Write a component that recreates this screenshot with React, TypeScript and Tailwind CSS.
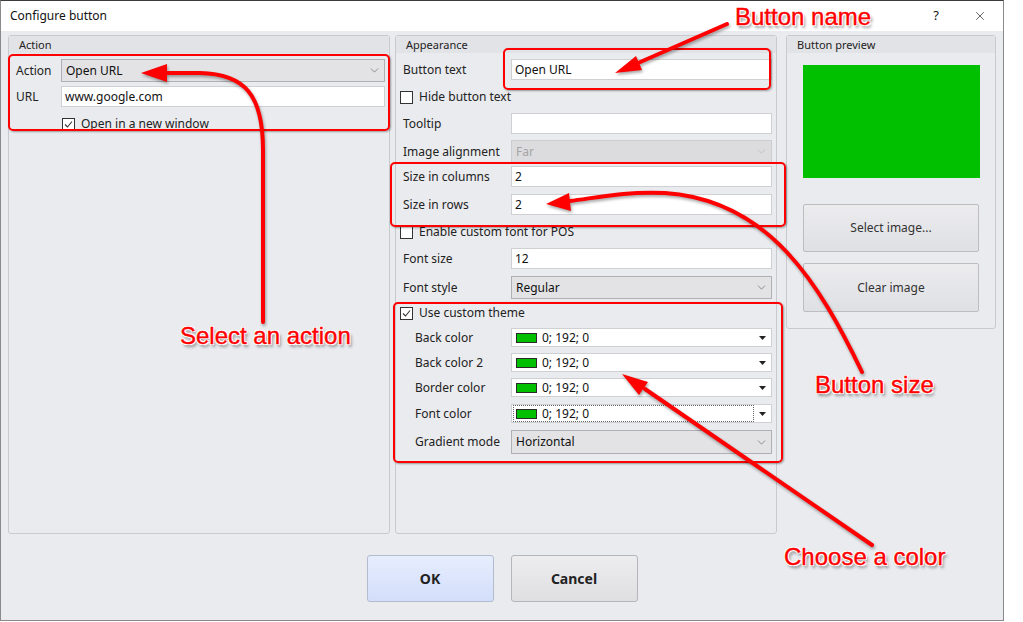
import { ChevronDown, X } from 'lucide-react';
import type { ReactNode } from 'react';

// Small building blocks for the WinForms-like dialog
const GroupBox = ({ title, className, children }: { title: string; className: string; children?: ReactNode }) => (
  <div className={`flex shrink-0 flex-col rounded-[3px] border border-[#c9cacd] ${className}`}>
    <div className="h-[17px] shrink-0 bg-[#e2e3e7] pl-[10px] text-[11px] leading-[17px] text-[#222]">{title}</div>
    {children}
  </div>
);

const TextBox = ({ value = '', className = '' }: { value?: string; className?: string }) => (
  <div className={`flex items-center border border-[#cfd0d4] bg-white px-[3px] text-[12px] text-[#111] ${className}`}>
    {value}
  </div>
);

const ComboBox = ({ value, disabled, className = '' }: { value: string; disabled?: boolean; className?: string }) => (
  <div
    className={`flex items-center justify-between border pl-[4px] pr-[3px] text-[12px] ${
      disabled ? 'border-[#cdcdcf] bg-[#dcdcde] text-[#a5a5a5]' : 'border-[#b0b0b4] bg-[#e3e3e5] text-[#111]'
    } ${className}`}
  >
    <span>{value}</span>
    <ChevronDown size={13} strokeWidth={1.3} className={disabled ? 'text-[#b8b8b8]' : 'text-[#6b6b6b]'} />
  </div>
);

const ColorBox = ({ focused }: { focused?: boolean }) => (
  <div className="flex h-full w-[261px] items-center border border-[#cfd0d4] bg-white">
    <div
      className={`ml-[1px] flex h-[17px] flex-1 items-center border pl-[2px] ${
        focused ? 'border-dotted border-[#666]' : 'border-transparent'
      }`}
    >
      <span className="h-[10px] w-[21px] border border-[#2a2a2a] bg-[#00c000]" />
      <span className="ml-[5px] text-[12px] text-[#111]">0; 192; 0</span>
    </div>
    <div className="flex w-[17px] justify-center">
      <svg width="7" height="4" viewBox="0 0 7 4">
        <polygon points="0,0 7,0 3.5,4" fill="#222" />
      </svg>
    </div>
  </div>
);

const Check = ({ checked, label, className = '' }: { checked?: boolean; label: string; className?: string }) => (
  <div className={`flex items-center gap-[6px] text-[12px] text-[#222] ${className}`}>
    <span className="flex h-[13px] w-[13px] items-center justify-center border border-[#333] bg-white">
      {checked && (
        <svg viewBox="0 0 11 11" className="h-[11px] w-[11px]">
          <polyline points="2,5.5 4.5,8 9,2.5" fill="none" stroke="#333" strokeWidth="1.1" />
        </svg>
      )}
    </span>
    {label}
  </div>
);

const FieldRow = ({
  label,
  className,
  indent,
  children,
}: {
  label: string;
  className: string;
  indent?: boolean;
  children: ReactNode;
}) => (
  <div className={`flex items-center ${indent ? 'pl-[19px]' : 'pl-[7px]'} ${className}`}>
    <span className={`${indent ? 'w-[96px]' : 'w-[108px]'} shrink-0 text-[12px] text-[#222]`}>{label}</span>
    {children}
  </div>
);

const PreviewButton = ({ label, className }: { label: string; className: string }) => (
  <div
    className={`ml-[16px] flex w-[176px] items-center justify-center rounded-[2px] border border-[#bdbdc1] bg-gradient-to-b from-[#ececef] to-[#dfe0e3] text-[12px] text-[#333] ${className}`}
  >
    {label}
  </div>
);

const RedBox = ({ className }: { className: string }) => (
  <div
    className={`pointer-events-none absolute rounded-[5px] border-2 border-[#ff0000] shadow-[1px_1px_2px_rgba(0,0,0,0.35)] ${className}`}
  />
);

const Note = ({ text, className }: { text: string; className: string }) => (
  <div
    className={`pointer-events-none absolute font-['Liberation_Sans',Arial,sans-serif] text-[24px] leading-none text-[#ff0000] [-webkit-text-stroke:0.4px_#ff0000] [text-shadow:1px_1px_0_#fff,-1px_-1px_0_#fff,1px_-1px_0_#fff,-1px_1px_0_#fff,2px_3px_3px_rgba(0,0,0,0.45)] ${className}`}
  >
    {text}
  </div>
);

const Arrows = () => (
  <svg
    className="pointer-events-none absolute left-0 top-0 h-[622px] w-[1023px] drop-shadow-[1px_2px_1.5px_rgba(0,0,0,0.35)]"
    viewBox="0 0 1023 622"
  >
    <g fill="none" stroke="#ff0000" strokeWidth="4" strokeLinecap="round">
      <path d="M727 24 L638 63" />
      <path d="M263 322 L263 150 C263 95 245 74 200 73 L166 73" />
      <path d="M862 372 C820 285 770 200 665 193 C625 191 595 198 570 201" />
      <path d="M872 545 L645 389" />
    </g>
    <g fill="#ff0000">
      <polygon points="615,73 642,70 636,56" />
      <polygon points="141,73 167,64 167,82" />
      <polygon points="546,204 569,193 571,211" />
      <polygon points="622,374 648,382 639,395" />
    </g>
  </svg>
);

export default function App() {
  return (
    <div className="relative h-[622px] w-[1023px] overflow-hidden bg-white font-['Noto_Sans',sans-serif]">
      <div className="flex h-[621px] w-[1004px] flex-col border border-[#8a8a8a] border-t-[#3c3c3c] bg-[#eaebee]">
        {/* Title bar */}
        <div className="flex h-[30px] shrink-0 items-center bg-white pl-[9px] text-[12px] text-[#111]">
          <span>Configure button</span>
          <span className="ml-auto mr-[34px] text-[13px]">?</span>
          <X size={14} strokeWidth={1.2} className="mr-[16px] text-[#222]" />
        </div>

        {/* Groups */}
        <div className="flex pl-[7px] pt-[4px]">
          <GroupBox title="Action" className="h-[499px] w-[382px]">
            <div className="mt-[6px] flex h-[23px] items-center pl-[7px]">
              <span className="w-[45px] text-[12px] text-[#222]">Action</span>
              <ComboBox value="Open URL" className="h-full w-[324px]" />
            </div>
            <div className="mt-[4px] flex h-[21px] items-center pl-[7px]">
              <span className="w-[45px] text-[12px] text-[#222]">URL</span>
              <TextBox value="www.google.com" className="h-full w-[324px]" />
            </div>
            <Check checked label="Open in a new window" className="mt-[9px] h-[16px] pl-[53px]" />
          </GroupBox>

          <GroupBox title="Appearance" className="ml-[5px] h-[499px] w-[382px]">
            <FieldRow label="Button text" className="mt-[6px] h-[21px]">
              <TextBox value="Open URL" className="h-full w-[261px]" />
            </FieldRow>
            <Check label="Hide button text" className="mt-[9px] h-[16px] pl-[4px]" />
            <FieldRow label="Tooltip" className="mt-[8px] h-[21px]">
              <TextBox className="h-full w-[261px]" />
            </FieldRow>
            <FieldRow label="Image alignment" className="mt-[6px] h-[23px]">
              <ComboBox value="Far" disabled className="h-full w-[261px]" />
            </FieldRow>
            <FieldRow label="Size in columns" className="mt-[3px] h-[21px]">
              <TextBox value="2" className="h-full w-[261px]" />
            </FieldRow>
            <FieldRow label="Size in rows" className="mt-[7px] h-[21px]">
              <TextBox value="2" className="h-full w-[261px]" />
            </FieldRow>
            <Check label="Enable custom font for POS" className="mt-[9px] h-[16px] pl-[4px]" />
            <FieldRow label="Font size" className="mt-[8px] h-[21px]">
              <TextBox value="12" className="h-full w-[261px]" />
            </FieldRow>
            <FieldRow label="Font style" className="mt-[7px] h-[23px]">
              <ComboBox value="Regular" className="h-full w-[261px]" />
            </FieldRow>
            <Check checked label="Use custom theme" className="mt-[6px] h-[16px] pl-[4px]" />
            <FieldRow label="Back color" indent className="mt-[7px] h-[19px]">
              <ColorBox />
            </FieldRow>
            <FieldRow label="Back color 2" indent className="mt-[6px] h-[19px]">
              <ColorBox />
            </FieldRow>
            <FieldRow label="Border color" indent className="mt-[6px] h-[19px]">
              <ColorBox />
            </FieldRow>
            <FieldRow label="Font color" indent className="mt-[7px] h-[19px]">
              <ColorBox focused />
            </FieldRow>
            <FieldRow label="Gradient mode" indent className="mt-[7px] h-[24px]">
              <ComboBox value="Horizontal" className="h-full w-[261px]" />
            </FieldRow>
          </GroupBox>

          <GroupBox title="Button preview" className="ml-[9px] h-[294px] w-[210px]">
            <div className="ml-[16px] mt-[12px] h-[113px] w-[177px] bg-[#00c000]" />
            <PreviewButton label="Select image..." className="mt-[26px] h-[48px]" />
            <PreviewButton label="Clear image" className="mt-[11px] h-[49px]" />
          </GroupBox>
        </div>

        {/* Dialog buttons */}
        <div className="mt-[21px] flex justify-center gap-[17px]">
          <button
            type="button"
            className="h-[47px] w-[127px] rounded-[3px] border border-[#b3bccf] bg-gradient-to-b from-[#e6edfd] to-[#d3defa] text-[14px] font-bold text-[#222]"
          >
            OK
          </button>
          <button
            type="button"
            className="h-[47px] w-[127px] rounded-[3px] border border-[#b6b6ba] bg-gradient-to-b from-[#ededf0] to-[#dfdfe2] text-[14px] font-bold text-[#222]"
          >
            Cancel
          </button>
        </div>
      </div>

      {/* Annotations */}
      <RedBox className="left-[8px] top-[54px] h-[77px] w-[382px]" />
      <RedBox className="left-[503px] top-[48px] h-[42px] w-[268px]" />
      <RedBox className="left-[390px] top-[162px] h-[65px] w-[396px]" />
      <RedBox className="left-[393px] top-[302px] h-[161px] w-[390px]" />
      <Arrows />
      <Note text="Button name" className="left-[735px] top-[5px]" />
      <Note text="Select an action" className="left-[180px] top-[324px]" />
      <Note text="Button size" className="left-[815px] top-[373px]" />
      <Note text="Choose a color" className="left-[784px] top-[545px]" />
    </div>
  );
}
